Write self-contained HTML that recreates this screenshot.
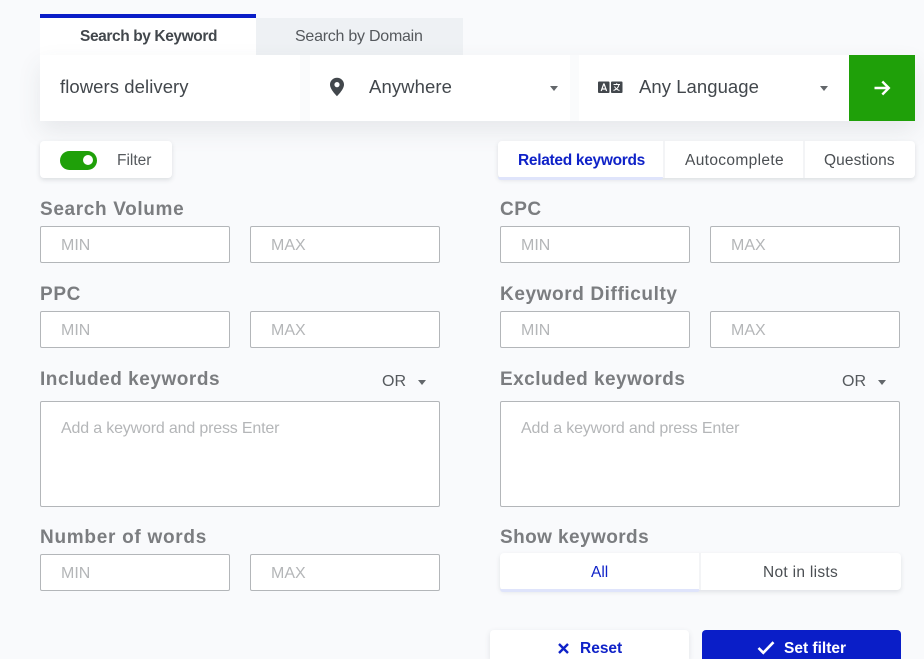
<!DOCTYPE html>
<html lang="en">
<head>
<meta charset="utf-8">
<title>Keyword search filter</title>
<style>
html,body{margin:0;padding:0;width:924px;height:659px;overflow:hidden}
body{position:relative;background:#f9fafc;font-family:"Liberation Sans",sans-serif;color:#42474c}
.a{position:absolute;box-sizing:border-box}
.t{position:absolute;white-space:nowrap;line-height:20px}
.white{background:#fff}
.lab{position:absolute;white-space:nowrap;font-size:19px;font-weight:bold;color:#7b7d80;line-height:24px;letter-spacing:.65px}
.inp{position:absolute;box-sizing:border-box;width:190px;height:37px;background:#fff;border:1px solid #b3b6b9;border-radius:2px;font-size:16px;color:#b4b6b8;line-height:37px;padding-left:20px}
.area{position:absolute;box-sizing:border-box;width:400px;height:106px;background:#fff;border:1px solid #b3b6b9;border-radius:2px;font-size:16px;color:#b4b6b8;line-height:20px;padding:17px 0 0 20px;letter-spacing:-.17px}
.caret{position:absolute;width:0;height:0;border-left:4.5px solid transparent;border-right:4.5px solid transparent;border-top:5px solid #63676b}
svg{position:absolute;display:block}
</style>
</head>
<body>

<!-- search tabs -->
<div class="a" style="left:256px;top:18px;width:207px;height:37px;background:#eef1f4"></div>
<div class="a white" style="left:40px;top:14px;width:216px;height:41px;border-top:4px solid #0a1ec8"></div>
<div class="t" style="left:80px;top:26px;font-size:15.500px;font-weight:bold;letter-spacing:-.4px;margin-top:1px">Search by Keyword</div>
<div class="t" style="left:295px;top:27px;font-size:16px;color:#55595d;letter-spacing:-.25px">Search by Domain</div>

<!-- search bar -->
<div class="a" style="left:40px;top:55px;width:875px;height:66px;background:#fff;box-shadow:0 10px 24px rgba(70,80,90,.10)"></div>
<div class="a" style="left:300px;top:55px;width:10px;height:66px;background:#fafbfc"></div>
<div class="a" style="left:570px;top:55px;width:9px;height:66px;background:#fafbfc"></div>
<div class="t" style="left:60px;top:77px;font-size:18.500px;letter-spacing:.07px">flowers delivery</div>
<svg style="left:329px;top:77px" width="16" height="20" viewBox="0 0 16 20"><path fill="#42474c" fill-rule="evenodd" d="M8 .8C4.200.8 1 3.800 1 7.600c0 4.600 5.600 10 7 11.600 1.400-1.600 7-7 7-11.600C15 3.800 11.800.8 8 .8zm0 9.400a2.600 2.600 0 1 1 0-5.200 2.600 2.600 0 0 1 0 5.200z"/></svg>
<div class="t" style="left:369px;top:77px;font-size:18.500px;letter-spacing:.1px">Anywhere</div>
<div class="caret" style="left:550px;top:86px"></div>

<svg style="left:598px;top:81px" width="25" height="13" viewBox="0 0 25 13"><rect x="0" y="0.500" width="11.500" height="11.500" rx="1" fill="#42474c"/><rect x="13" y="0.500" width="11.500" height="11.500" rx="1" fill="#42474c"/><path d="M3.200 10 5.700 3h.4l2.500 7M4.200 8h3.400" fill="none" stroke="#fff" stroke-width="1.200"/><path d="M15.500 3.500h6.500M18.700 2.300v1.200M21 3.500c-.6 3-2.500 5-5.500 6M16.500 5.500c1 2 2.500 3.200 5 4" fill="none" stroke="#fff" stroke-width="1"/></svg>
<div class="t" style="left:639px;top:77px;font-size:18.500px;letter-spacing:.05px">Any Language</div>
<div class="caret" style="left:820px;top:86px"></div>

<div class="a" style="left:849px;top:55px;width:66px;height:66px;background:#1fa009"></div>
<svg style="left:872px;top:78px" width="20" height="20" viewBox="0 0 20 20"><path d="M2.500 10h14M10.300 3.500 16.800 10l-6.500 6.500" fill="none" stroke="#fff" stroke-width="2.400"/></svg>

<!-- filter toggle -->
<div class="a white" style="left:40px;top:141px;width:132px;height:37px;border-radius:4px;box-shadow:0 2px 5px rgba(70,80,90,.16)"></div>
<div class="a" style="left:60px;top:151px;width:37px;height:19px;border-radius:10px;background:#1fa009"></div>
<div class="a" style="left:83px;top:155px;width:10px;height:10px;border-radius:50%;background:#fff"></div>
<div class="t" style="left:117px;top:151px;font-size:15.500px;color:#55595d">Filter</div>

<!-- keyword mode tabs -->
<div class="a white" style="left:498px;top:141px;width:417px;height:37px;border-radius:4px;box-shadow:0 2px 5px rgba(70,80,90,.16)"></div>
<div class="a" style="left:498px;top:177px;width:165px;height:3px;background:#dfe4fb;border-radius:0 0 4px 4px"></div>
<div class="a" style="left:663px;top:141px;width:2px;height:37px;background:#f3f4f6"></div>
<div class="a" style="left:803px;top:141px;width:2px;height:37px;background:#f3f4f6"></div>
<div class="t" style="left:518px;top:151px;font-size:15.500px;font-weight:bold;color:#0f22c8;letter-spacing:-.3px">Related keywords</div>
<div class="t" style="left:685px;top:151px;font-size:15.500px;color:#4b4f53;letter-spacing:.35px">Autocomplete</div>
<div class="t" style="left:824px;top:151px;font-size:15.500px;color:#4b4f53;letter-spacing:.1px">Questions</div>

<!-- left column -->
<div class="lab" style="left:40px;top:198px">Search Volume</div>
<div class="inp" style="left:40px;top:226px">MIN</div>
<div class="inp" style="left:250px;top:226px">MAX</div>

<div class="lab" style="left:40px;top:283px">PPC</div>
<div class="inp" style="left:40px;top:311px">MIN</div>
<div class="inp" style="left:250px;top:311px">MAX</div>

<div class="lab" style="left:40px;top:368px;letter-spacing:.53px">Included keywords</div>
<div class="t" style="left:382px;top:372px;font-size:16px;color:#55595d">OR</div>
<div class="caret" style="left:418px;top:380px"></div>
<div class="area" style="left:40px;top:401px">Add a keyword and press Enter</div>

<div class="lab" style="left:40px;top:526px;letter-spacing:.72px">Number of words</div>
<div class="inp" style="left:40px;top:554px">MIN</div>
<div class="inp" style="left:250px;top:554px">MAX</div>

<!-- right column -->
<div class="lab" style="left:500px;top:198px;letter-spacing:.5px">CPC</div>
<div class="inp" style="left:500px;top:226px">MIN</div>
<div class="inp" style="left:710px;top:226px">MAX</div>

<div class="lab" style="left:500px;top:283px;letter-spacing:.6px">Keyword Difficulty</div>
<div class="inp" style="left:500px;top:311px">MIN</div>
<div class="inp" style="left:710px;top:311px">MAX</div>

<div class="lab" style="left:500px;top:368px;letter-spacing:.47px">Excluded keywords</div>
<div class="t" style="left:842px;top:372px;font-size:16px;color:#55595d">OR</div>
<div class="caret" style="left:878px;top:380px"></div>
<div class="area" style="left:500px;top:401px">Add a keyword and press Enter</div>

<div class="lab" style="left:500px;top:526px;letter-spacing:.42px">Show keywords</div>
<div class="a white" style="left:500px;top:553px;width:401px;height:37px;border-radius:4px;box-shadow:0 2px 5px rgba(70,80,90,.14)"></div>
<div class="a" style="left:500px;top:589px;width:200px;height:3px;background:#dfe4fb;border-radius:0 0 4px 4px"></div>
<div class="a" style="left:699px;top:553px;width:2px;height:37px;background:#f3f4f6"></div>
<div class="t" style="left:591px;top:563px;font-size:15.500px;color:#0f22c8">All</div>
<div class="t" style="left:763px;top:563px;font-size:15.500px;color:#4b4f53;letter-spacing:.3px">Not in lists</div>

<!-- actions -->
<div class="a white" style="left:490px;top:630px;width:199px;height:29px;border-radius:4px 4px 0 0;box-shadow:0 2px 6px rgba(70,80,90,.14)"></div>
<svg style="left:557px;top:642px" width="13" height="13" viewBox="0 0 13 13"><path d="M2 2l9 9M11 2l-9 9" fill="none" stroke="#0f22c8" stroke-width="2.400"/></svg>
<div class="t" style="left:580px;top:639px;font-size:15.500px;font-weight:bold;color:#0f22c8">Reset</div>
<div class="a" style="left:702px;top:630px;width:199px;height:29px;border-radius:4px 4px 0 0;background:#0a1ec8"></div>
<svg style="left:757px;top:640px" width="18" height="15" viewBox="0 0 18 15"><path d="M1.500 8 6.300 12.800 16.500 2.200" fill="none" stroke="#fff" stroke-width="2.600"/></svg>
<div class="t" style="left:784px;top:639px;font-size:15.500px;font-weight:bold;color:#fff">Set filter</div>

</body>
</html>
